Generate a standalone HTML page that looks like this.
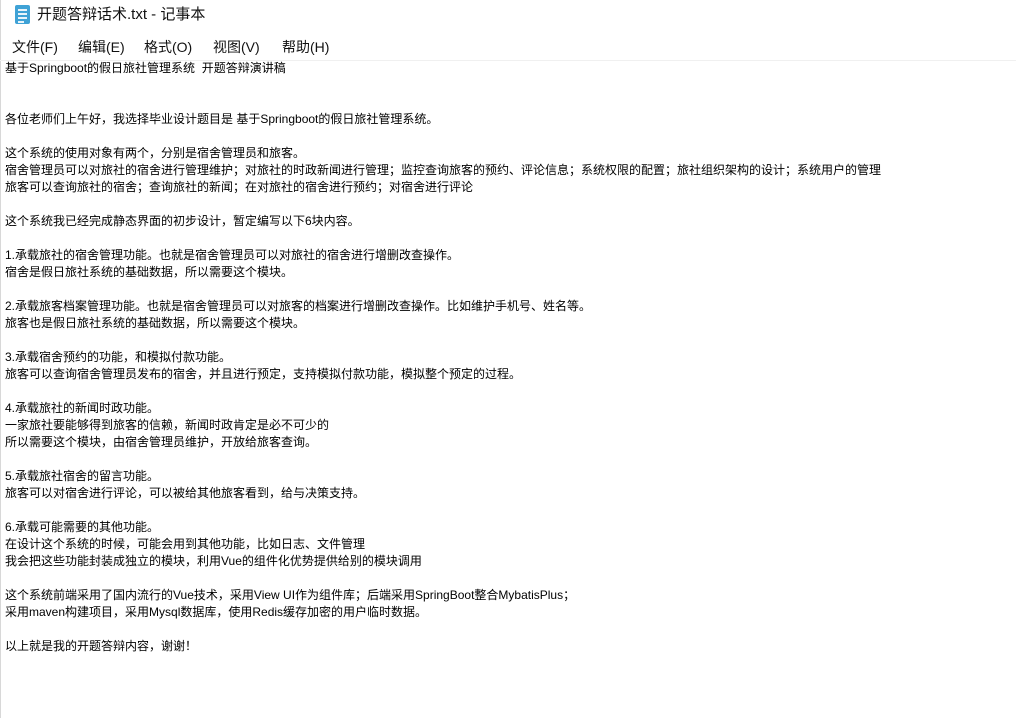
<!DOCTYPE html>
<html><head><meta charset="utf-8"><style>
html,body{margin:0;padding:0;width:1016px;height:718px;overflow:hidden;background:#fff;font-family:"Liberation Sans","Noto Sans CJK SC","Microsoft YaHei",sans-serif;color:#000}
.title{position:absolute;left:37px;top:5px;font-size:15px;line-height:20px;color:#111}
.icon{position:absolute;left:15px;top:5px;width:15px;height:19px;background:#3fa2d6;border-radius:2px}
.icon i{position:absolute;left:3px;width:9px;height:1.5px;background:#e8f4fb}
.menu{position:absolute;top:37px;left:0;height:22px;font-size:14px;line-height:20px;color:#111}
.menu span{position:absolute;white-space:nowrap}
.sep{position:absolute;left:0;top:60px;width:1016px;height:1px;background:#f0f0f0}
.txt{position:absolute;left:5px;top:60px;font-size:12px;line-height:17px;white-space:pre;color:#000}
.lb{position:absolute;left:0;top:0;width:1px;height:718px;background:#d8d8d8}
</style></head><body>
<div class="lb"></div>
<div class="icon"><i style="top:4px"></i><i style="top:8px"></i><i style="top:12px"></i><i style="top:16px;width:6px"></i></div>
<div class="title">开题答辩话术.txt - 记事本</div>
<div class="menu"><span style="left:12px">文件(F)</span><span style="left:78px">编辑(E)</span><span style="left:144px">格式(O)</span><span style="left:213px">视图(V)</span><span style="left:282px">帮助(H)</span></div>
<div class="sep"></div>
<div class="txt">基于Springboot的假日旅社管理系统  开题答辩演讲稿


各位老师们上午好，我选择毕业设计题目是 基于Springboot的假日旅社管理系统。

这个系统的使用对象有两个，分别是宿舍管理员和旅客。
宿舍管理员可以对旅社的宿舍进行管理维护；对旅社的时政新闻进行管理；监控查询旅客的预约、评论信息；系统权限的配置；旅社组织架构的设计；系统用户的管理
旅客可以查询旅社的宿舍；查询旅社的新闻；在对旅社的宿舍进行预约；对宿舍进行评论

这个系统我已经完成静态界面的初步设计，暂定编写以下6块内容。

1.承载旅社的宿舍管理功能。也就是宿舍管理员可以对旅社的宿舍进行增删改查操作。
宿舍是假日旅社系统的基础数据，所以需要这个模块。

2.承载旅客档案管理功能。也就是宿舍管理员可以对旅客的档案进行增删改查操作。比如维护手机号、姓名等。
旅客也是假日旅社系统的基础数据，所以需要这个模块。

3.承载宿舍预约的功能，和模拟付款功能。
旅客可以查询宿舍管理员发布的宿舍，并且进行预定，支持模拟付款功能，模拟整个预定的过程。

4.承载旅社的新闻时政功能。
一家旅社要能够得到旅客的信赖，新闻时政肯定是必不可少的
所以需要这个模块，由宿舍管理员维护，开放给旅客查询。

5.承载旅社宿舍的留言功能。
旅客可以对宿舍进行评论，可以被给其他旅客看到，给与决策支持。

6.承载可能需要的其他功能。
在设计这个系统的时候，可能会用到其他功能，比如日志、文件管理
我会把这些功能封装成独立的模块，利用Vue的组件化优势提供给别的模块调用

这个系统前端采用了国内流行的Vue技术，采用View UI作为组件库；后端采用SpringBoot整合MybatisPlus；
采用maven构建项目，采用Mysql数据库，使用Redis缓存加密的用户临时数据。

以上就是我的开题答辩内容，谢谢！</div>
</body></html>
